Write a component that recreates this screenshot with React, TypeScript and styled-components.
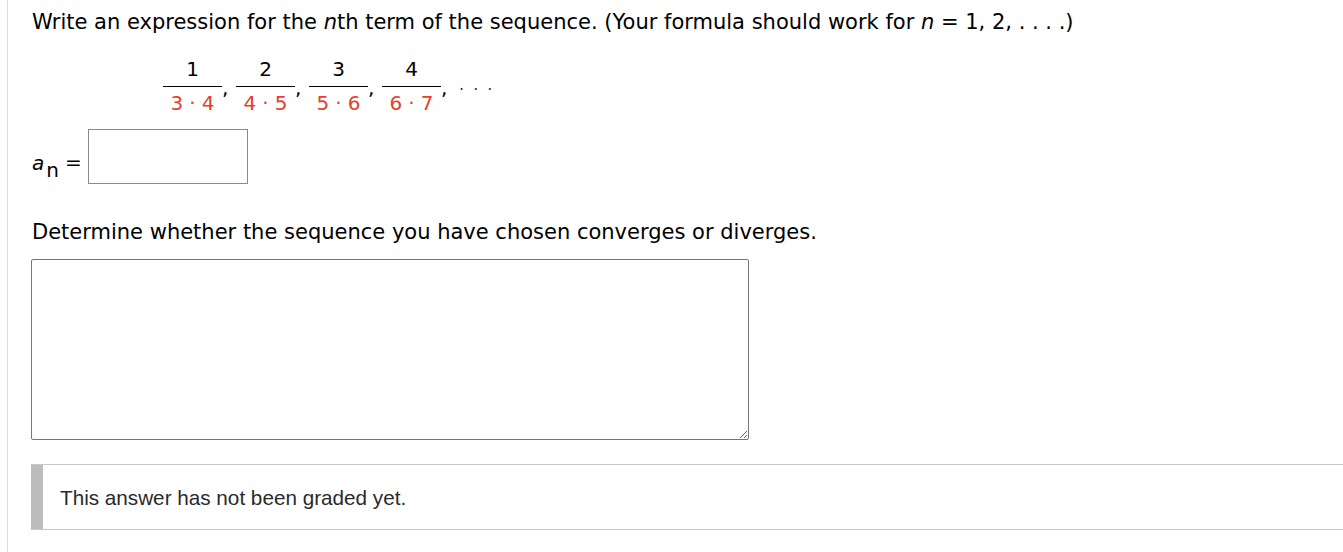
import React from "react";
import styled, { createGlobalStyle } from "styled-components";

const Global = createGlobalStyle`
  html, body { margin: 0; padding: 0; background: #fff; }
  body { font-family: "DejaVu Sans", Verdana, sans-serif; color: #000; }
`;

const Page = styled.div`
  margin-left: 7px;
  border-left: 1px solid #dcdcdc;
  min-height: 100vh;
  padding: 8px 0 0 24px;
  box-sizing: border-box;
`;

const Prompt = styled.p`
  margin: 0;
  font-size: 21px;
  line-height: 28px;
`;

const Sequence = styled.div`
  display: flex;
  align-items: center;
  margin: 21px 0 0 131px;
  font-size: 20px;
`;

const Fraction = styled.span`
  display: inline-flex;
  flex-direction: column;
  align-items: center;
  width: 59px;
`;

const Num = styled.span`
  line-height: 24px;
  padding-bottom: 5px;
  width: 100%;
  text-align: center;
  border-bottom: 1px solid #000;
`;

const Den = styled.span`
  line-height: 24px;
  padding-top: 4px;
  color: #e4402b;
  white-space: nowrap;
`;

const Dot = styled.span`
  margin: 0 6px;
`;

const Comma = styled.span`
  width: 14px;
  line-height: 20px;
  margin-top: 4px;
`;

const Ellipsis = styled.span`
  letter-spacing: 2px;
  margin-left: 4px;
  font-size: 16px;
  color: #333;
  margin-top: -4px;
`;

const AnswerRow = styled.div`
  display: flex;
  align-items: center;
  margin-top: 14px;
`;

const Var = styled.span`
  font-size: 20px;
  line-height: 20px;
  font-style: italic;
  position: relative;
  top: 6px;
`;

const Sub = styled.span`
  font-size: 20px;
  font-style: normal;
  position: relative;
  top: 7px;
  margin-left: 2px;
`;

const Equals = styled.span`
  font-size: 20px;
  margin-left: 6px;
  margin-right: 6px;
  position: relative;
  top: 5px;
`;

const Input = styled.input`
  width: 158px;
  height: 53px;
  border: 1px solid #8a8a8a;
  box-sizing: content-box;
  padding: 0;
  margin: 0;
  font-size: 20px;
  outline: none;
`;

const Question = styled.p`
  margin: 34px 0 0;
  font-size: 21px;
  line-height: 28px;
`;

const TextArea = styled.textarea`
  display: block;
  margin: 13px 0 0 -1px;
  width: 718px;
  height: 181px;
  box-sizing: border-box;
  border: 1px solid #767676;
  border-radius: 2px;
  padding: 4px;
  font-size: 16px;
  outline: none;
`;

const Feedback = styled.div`
  margin: 24px 0 0 -1px;
  display: flex;
  border-top: 1px solid #c8c8c8;
  border-bottom: 1px solid #c8c8c8;
  box-sizing: border-box;
  height: 66px;
`;

const Bar = styled.div`
  width: 12px;
  background: #bcbcbc;
  flex: none;
`;

const FeedbackText = styled.div`
  display: flex;
  align-items: center;
  padding: 1px 0 0 17px;
  font-family: "Liberation Sans", Arial, sans-serif;
  font-size: 20.7px;
  color: #2a2a2a;
`;

const terms = [
  ["1", "3", "4"],
  ["2", "4", "5"],
  ["3", "5", "6"],
  ["4", "6", "7"],
];

export default function App() {
  return (
    <>
      <Global />
      <Page>
        <Prompt>
          Write an expression for the <i>n</i>th term of the sequence. (Your formula should work
          for <i>n</i> = 1, 2, . . . .)
        </Prompt>
        <Sequence>
          {terms.map(([n, a, b]) => (
            <React.Fragment key={n}>
              <Fraction>
                <Num>{n}</Num>
                <Den>
                  {a}
                  <Dot>·</Dot>
                  {b}
                </Den>
              </Fraction>
              <Comma>,</Comma>
            </React.Fragment>
          ))}
          <Ellipsis>. . .</Ellipsis>
        </Sequence>
        <AnswerRow>
          <Var>
            a<Sub>n</Sub>
          </Var>
          <Equals>=</Equals>
          <Input type="text" />
        </AnswerRow>
        <Question>Determine whether the sequence you have chosen converges or diverges.</Question>
        <TextArea />
        <Feedback>
          <Bar />
          <FeedbackText>This answer has not been graded yet.</FeedbackText>
        </Feedback>
      </Page>
    </>
  );
}
